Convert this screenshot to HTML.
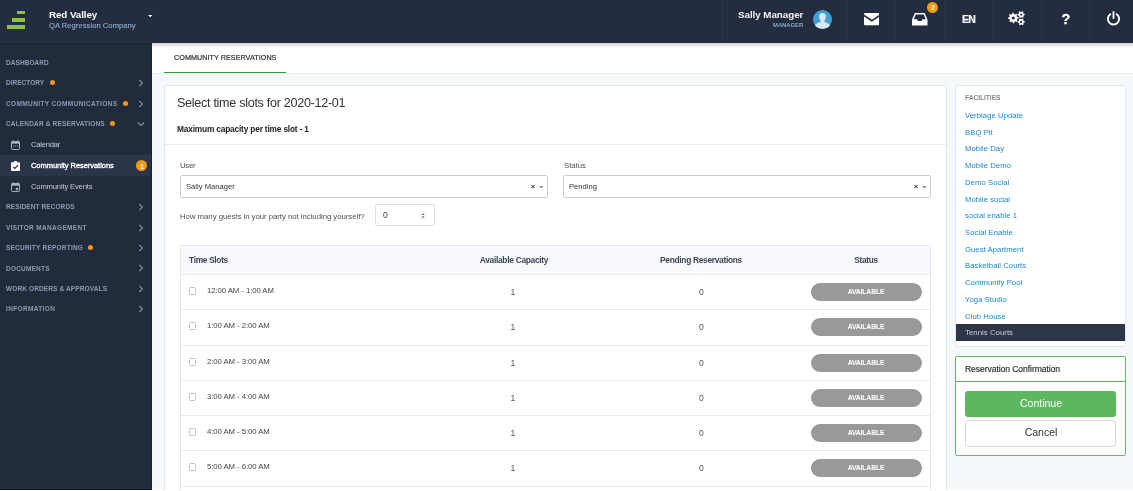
<!DOCTYPE html>
<html><head><meta charset="utf-8"><style>
html,body{margin:0;padding:0;width:1133px;height:491px;overflow:hidden;background:#f5f8fd;}
body{position:relative;font-family:"Liberation Sans",sans-serif;}
.t{position:absolute;white-space:nowrap;will-change:transform;}
.b{position:absolute;}
</style></head><body>
<div class="b" style="left:0px;top:0px;width:1133px;height:43px;background:#232d3f;"></div>
<div class="b" style="left:17px;top:10.6px;width:8px;height:3.700000000000001px;background:#8cc63e;"></div>
<div class="b" style="left:12px;top:18px;width:13px;height:3.8000000000000007px;background:#8cc63e;"></div>
<div class="b" style="left:7px;top:25.3px;width:18px;height:3.8000000000000007px;background:#8cc63e;"></div>
<div class="t" style="top:9.70px;font-size:9.80px;line-height:9.80px;color:#ffffff;font-weight:bold;letter-spacing:-0.081px;left:48.50px;">Red Valley</div>
<div class="t" style="top:22.37px;font-size:7.60px;line-height:7.60px;color:#8da6c4;letter-spacing:0.047px;left:48.50px;-webkit-text-stroke:0.15px #8da6c4;">QA Regression Company</div>
<svg class="b" style="left:148px;top:14.8px" width="5" height="3"><path d="M0 0H4.4L2.2 2.2Z" fill="#fff"/></svg>
<div class="b" style="left:722px;top:0px;width:1px;height:43px;background:#2a3446;"></div>
<div class="b" style="left:847px;top:0px;width:1px;height:43px;background:#2a3446;"></div>
<div class="b" style="left:895px;top:0px;width:1px;height:43px;background:#2a3446;"></div>
<div class="b" style="left:944px;top:0px;width:1px;height:43px;background:#2a3446;"></div>
<div class="b" style="left:992px;top:0px;width:1px;height:43px;background:#2a3446;"></div>
<div class="b" style="left:1041px;top:0px;width:1px;height:43px;background:#2a3446;"></div>
<div class="b" style="left:1089px;top:0px;width:1px;height:43px;background:#2a3446;"></div>
<div class="t" style="top:10.20px;font-size:9.80px;line-height:9.80px;color:#f2f2f2;font-weight:bold;letter-spacing:-0.042px;right:329.54px;text-align:right;">Sally Manager</div>
<div class="t" style="top:22.90px;font-size:5.90px;line-height:5.90px;color:#89a5c6;font-weight:bold;letter-spacing:-0.031px;right:329.83px;text-align:right;">MANAGER</div>
<svg class="b" style="left:813px;top:10px" width="19" height="19" viewBox="0 0 19 19">
<defs><clipPath id="cc"><circle cx="9.5" cy="9.5" r="9.5"/></clipPath></defs>
<circle cx="9.5" cy="9.5" r="9.5" fill="#40a0d5"/>
<g clip-path="url(#cc)" fill="#d5e8f4">
<path d="M6.2 6.6 C6.2 4.1 7.5 3 9.5 3 C11.5 3 12.8 4.1 12.8 6.6 C12.8 8.6 12.1 10 11.4 10.8 L11.4 12.1 C13.6 12.7 16 13.7 17.6 15.4 L17.6 19 L1.4 19 L1.4 15.4 C3 13.7 5.4 12.7 7.6 12.1 L7.6 10.8 C6.9 10 6.2 8.6 6.2 6.6Z"/>
</g></svg>
<svg class="b" style="left:863.5px;top:13px" width="15.7" height="12.7" viewBox="0 0 17 13" preserveAspectRatio="none">
<path d="M1.2 0 H15.8 Q17 0 17 1.2 V1.6 L8.5 7 L0 1.6 V1.2 Q0 0 1.2 0Z" fill="#fff"/>
<path d="M0 3.6 L8.5 9 L17 3.6 V11.6 Q17 12.6 15.8 12.6 H1.2 Q0 12.6 0 11.6Z" fill="#fff"/>
</svg>
<svg class="b" style="left:912px;top:12.8px" width="15.5" height="12.9" viewBox="0 0 16 13" preserveAspectRatio="none">
<path d="M3 0 H13 L16 6.5 V12 Q16 12.6 15.4 12.6 H0.6 Q0 12.6 0 12 V6.5Z M3.8 1.6 L1.9 6.2 H5.2 L6.1 8 H9.9 L10.8 6.2 H14.1 L12.2 1.6Z" fill="#fff" fill-rule="evenodd"/>
</svg>
<div class="b" style="left:927px;top:1.5px;width:11px;height:11px;border-radius:50%;background:#f5990c;"></div>
<div class="t" style="top:3.97px;font-size:7.00px;line-height:7.00px;color:#fff;font-weight:bold;left:632.50px;width:600px;text-align:center;">2</div>
<div class="t" style="top:13.71px;font-size:10.50px;line-height:10.50px;color:#f4f4f4;font-weight:bold;letter-spacing:-0.787px;left:961.50px;-webkit-text-stroke:0.2px #f4f4f4;">EN</div>
<svg class="b" style="left:1008px;top:11px" width="18" height="15" viewBox="0 0 18 15"><path fill-rule="evenodd" d="M10.54,6.22 L10.59,7.26 L9.08,7.95 L8.83,8.67 L9.56,10.16 L8.86,10.93 L7.31,10.35 L6.61,10.67 L6.08,12.24 L5.04,12.29 L4.35,10.78 L3.63,10.53 L2.14,11.26 L1.37,10.56 L1.95,9.01 L1.63,8.31 L0.06,7.78 L0.01,6.74 L1.52,6.05 L1.77,5.33 L1.04,3.84 L1.74,3.07 L3.29,3.65 L3.99,3.33 L4.52,1.76 L5.56,1.71 L6.25,3.22 L6.97,3.47 L8.46,2.74 L9.23,3.44 L8.65,4.99 L8.97,5.69Z M6.9,7.0 A1.6,1.6 0 1,0 3.6999999999999997,7.0 A1.6,1.6 0 1,0 6.9,7.0Z" fill="#fff"/><path fill-rule="evenodd" d="M16.73,2.90 L16.79,3.84 L15.66,4.44 L15.36,5.04 L15.57,6.31 L14.79,6.83 L13.71,6.15 L13.03,6.19 L12.04,7.01 L11.20,6.59 L11.25,5.31 L10.87,4.75 L9.67,4.30 L9.61,3.36 L10.74,2.76 L11.04,2.16 L10.83,0.89 L11.61,0.37 L12.69,1.05 L13.37,1.01 L14.36,0.19 L15.20,0.61 L15.15,1.89 L15.53,2.45Z M14.299999999999999,3.6 A1.1,1.1 0 1,0 12.1,3.6 A1.1,1.1 0 1,0 14.299999999999999,3.6Z" fill="#fff"/><path fill-rule="evenodd" d="M16.73,10.20 L16.79,11.14 L15.66,11.74 L15.36,12.34 L15.57,13.61 L14.79,14.13 L13.71,13.45 L13.03,13.49 L12.04,14.31 L11.20,13.89 L11.25,12.61 L10.87,12.05 L9.67,11.60 L9.61,10.66 L10.74,10.06 L11.04,9.46 L10.83,8.19 L11.61,7.67 L12.69,8.35 L13.37,8.31 L14.36,7.49 L15.20,7.91 L15.15,9.19 L15.53,9.75Z M14.299999999999999,10.9 A1.1,1.1 0 1,0 12.1,10.9 A1.1,1.1 0 1,0 14.299999999999999,10.9Z" fill="#fff"/></svg>
<div class="t" style="top:12.21px;font-size:14.40px;line-height:14.40px;color:#fff;font-weight:bold;left:765.60px;width:600px;text-align:center;-webkit-text-stroke:0.3px #fff;">?</div>
<svg class="b" style="left:1106px;top:11px" width="15" height="15" viewBox="0 0 15 15">
<path d="M4.3 3.3 A5.6 5.6 0 1 0 10.7 3.3" fill="none" stroke="#fff" stroke-width="1.9" stroke-linecap="round"/>
<path d="M7.5 1 V7" stroke="#fff" stroke-width="1.9" stroke-linecap="round"/>
</svg>
<div class="b" style="left:0px;top:43px;width:152px;height:447px;background:#222b3b;"></div>
<div class="b" style="left:151px;top:43px;width:1px;height:447px;background:#1a2130;"></div>
<div class="b" style="left:0px;top:43px;width:152px;height:3px;background:linear-gradient(#1b2232,#222b3b);"></div>
<div class="t" style="top:60.07px;font-size:6.50px;line-height:6.50px;color:#8b9ab4;font-weight:bold;letter-spacing:0.056px;left:6.00px;">DASHBOARD</div>
<div class="t" style="top:80.47px;font-size:6.50px;line-height:6.50px;color:#8b9ab4;font-weight:bold;letter-spacing:0.022px;left:6.00px;">DIRECTORY</div>
<div class="b" style="left:50.2px;top:80.13600000000001px;width:5px;height:5px;border-radius:50%;background:#f7941d;"></div>
<svg class="b" style="left:138px;top:79.14px" width="6" height="8"><path d="M1.3 0.9 L4.4 4 L1.3 7.1" fill="none" stroke="#8592ab" stroke-width="1.15"/></svg>
<div class="t" style="top:100.97px;font-size:6.50px;line-height:6.50px;color:#8b9ab4;font-weight:bold;letter-spacing:0.378px;left:6.00px;">COMMUNITY COMMUNICATIONS</div>
<div class="b" style="left:122.5px;top:100.63600000000001px;width:5px;height:5px;border-radius:50%;background:#f7941d;"></div>
<svg class="b" style="left:138px;top:99.64px" width="6" height="8"><path d="M1.3 0.9 L4.4 4 L1.3 7.1" fill="none" stroke="#8592ab" stroke-width="1.15"/></svg>
<div class="t" style="top:121.07px;font-size:6.50px;line-height:6.50px;color:#8b9ab4;font-weight:bold;letter-spacing:0.164px;left:6.00px;">CALENDAR &amp; RESERVATIONS</div>
<div class="b" style="left:110.2px;top:120.736px;width:5px;height:5px;border-radius:50%;background:#f7941d;"></div>
<svg class="b" style="left:137px;top:120.74px" width="8" height="6"><path d="M0.9 1.3 L4 4.4 L7.1 1.3" fill="none" stroke="#8592ab" stroke-width="1.15"/></svg>
<div class="b" style="left:0px;top:155px;width:151px;height:21px;background:#2c3548;"></div>
<svg class="b" style="left:11px;top:140px" width="9" height="10" viewBox="0 0 9 10">
<path d="M2 0.3 V2 M7 0.3 V2" stroke="#aab3c2" stroke-width="1"/>
<rect x="0.5" y="1.5" width="8" height="8" rx="1" fill="none" stroke="#aab3c2" stroke-width="1"/>
<rect x="0.5" y="1.5" width="8" height="2.2" fill="#aab3c2"/>
<rect x="2" y="5.5" width="1" height="1" fill="#aab3c2"/><rect x="4" y="5.5" width="1" height="1" fill="#aab3c2"/><rect x="6" y="5.5" width="1" height="1" fill="#aab3c2"/>
</svg>
<svg class="b" style="left:11px;top:161px" width="9" height="10" viewBox="0 0 9 10">
<rect x="0" y="1.3" width="9" height="8.7" rx="1" fill="#fff"/>
<rect x="3" y="0" width="3" height="2.2" rx="0.5" fill="#fff"/>
<path d="M2.2 5.9 L3.8 7.4 L6.9 4.2" fill="none" stroke="#2c3548" stroke-width="1.3"/>
</svg>
<svg class="b" style="left:11px;top:182px" width="9" height="10" viewBox="0 0 9 10">
<path d="M2 0.3 V2 M7 0.3 V2" stroke="#aab3c2" stroke-width="1"/>
<rect x="0.5" y="1.5" width="8" height="8" rx="1" fill="none" stroke="#aab3c2" stroke-width="1"/>
<rect x="0.5" y="1.5" width="8" height="2.2" fill="#aab3c2"/>
<rect x="4.8" y="5.8" width="2.3" height="2.3" fill="#aab3c2"/>
</svg>
<div class="t" style="top:141.37px;font-size:7.60px;line-height:7.60px;color:#c5cbd5;letter-spacing:-0.235px;left:30.70px;">Calendar</div>
<div class="t" style="top:162.45px;font-size:7.50px;line-height:7.50px;color:#ffffff;letter-spacing:-0.048px;left:30.70px;-webkit-text-stroke:0.3px #fff;">Community Reservations</div>
<div class="t" style="top:183.17px;font-size:7.60px;line-height:7.60px;color:#c5cbd5;letter-spacing:-0.146px;left:30.70px;">Community Events</div>
<div class="b" style="left:136px;top:160px;width:11px;height:11px;border-radius:50%;background:#f5990c;"></div>
<div class="t" style="top:162.77px;font-size:7.00px;line-height:7.00px;color:#fff;font-weight:bold;left:-158.50px;width:600px;text-align:center;">1</div>
<div class="t" style="top:204.47px;font-size:6.50px;line-height:6.50px;color:#8b9ab4;font-weight:bold;letter-spacing:0.088px;left:6.00px;">RESIDENT RECORDS</div>
<svg class="b" style="left:138px;top:203.14px" width="6" height="8"><path d="M1.3 0.9 L4.4 4 L1.3 7.1" fill="none" stroke="#8592ab" stroke-width="1.15"/></svg>
<div class="t" style="top:224.87px;font-size:6.50px;line-height:6.50px;color:#8b9ab4;font-weight:bold;letter-spacing:0.319px;left:6.00px;">VISITOR MANAGEMENT</div>
<svg class="b" style="left:138px;top:223.54px" width="6" height="8"><path d="M1.3 0.9 L4.4 4 L1.3 7.1" fill="none" stroke="#8592ab" stroke-width="1.15"/></svg>
<div class="t" style="top:245.17px;font-size:6.50px;line-height:6.50px;color:#8b9ab4;font-weight:bold;letter-spacing:0.216px;left:6.00px;">SECURITY REPORTING</div>
<div class="b" style="left:87.9px;top:244.83599999999998px;width:5px;height:5px;border-radius:50%;background:#f7941d;"></div>
<svg class="b" style="left:138px;top:243.84px" width="6" height="8"><path d="M1.3 0.9 L4.4 4 L1.3 7.1" fill="none" stroke="#8592ab" stroke-width="1.15"/></svg>
<div class="t" style="top:265.57px;font-size:6.50px;line-height:6.50px;color:#8b9ab4;font-weight:bold;letter-spacing:0.204px;left:6.00px;">DOCUMENTS</div>
<svg class="b" style="left:138px;top:264.24px" width="6" height="8"><path d="M1.3 0.9 L4.4 4 L1.3 7.1" fill="none" stroke="#8592ab" stroke-width="1.15"/></svg>
<div class="t" style="top:285.97px;font-size:6.50px;line-height:6.50px;color:#8b9ab4;font-weight:bold;letter-spacing:0.126px;left:6.00px;">WORK ORDERS &amp; APPROVALS</div>
<svg class="b" style="left:138px;top:284.64px" width="6" height="8"><path d="M1.3 0.9 L4.4 4 L1.3 7.1" fill="none" stroke="#8592ab" stroke-width="1.15"/></svg>
<div class="t" style="top:306.27px;font-size:6.50px;line-height:6.50px;color:#8b9ab4;font-weight:bold;letter-spacing:0.349px;left:6.00px;">INFORMATION</div>
<svg class="b" style="left:138px;top:304.94px" width="6" height="8"><path d="M1.3 0.9 L4.4 4 L1.3 7.1" fill="none" stroke="#8592ab" stroke-width="1.15"/></svg>
<div class="b" style="left:0px;top:489px;width:152px;height:1px;background:#151b27;"></div>
<div class="b" style="left:152px;top:43px;width:981px;height:30px;background:#fff;"></div>
<div class="b" style="left:152px;top:73px;width:981px;height:418px;background:#f5f8fd;"></div>
<div class="b" style="left:152px;top:73px;width:981px;height:1px;background:#eef1f6;"></div>
<div class="b" style="left:152px;top:43px;width:981px;height:5px;background:linear-gradient(#d2d3d5,#ffffff);"></div>
<div class="t" style="top:54.10px;font-size:7.20px;line-height:7.20px;color:#303030;letter-spacing:0.053px;left:173.70px;-webkit-text-stroke:0.2px #303030;">COMMUNITY RESERVATIONS</div>
<div class="b" style="left:164px;top:72px;width:122px;height:1.4000000000000057px;background:#2b9a3e;"></div>
<div class="b" style="left:164px;top:85px;width:783px;height:410px;background:#fff;border:1px solid #dfe7f1;border-radius:2px;box-sizing:border-box;"></div>
<div class="t" style="top:97.23px;font-size:12.60px;line-height:12.60px;color:#333333;letter-spacing:-0.300px;left:177.20px;">Select time slots for 2020-12-01</div>
<div class="t" style="top:125.27px;font-size:8.30px;line-height:8.30px;color:#222222;font-weight:bold;letter-spacing:-0.165px;left:177.20px;">Maximum capacity per time slot - 1</div>
<div class="b" style="left:165px;top:144px;width:781px;height:1px;background:#e8edf3;"></div>
<div class="t" style="top:161.80px;font-size:7.80px;line-height:7.80px;color:#505050;letter-spacing:-0.299px;left:180.30px;">User</div>
<div class="b" style="left:180px;top:175px;width:368px;height:23px;border:1px solid #cfcfcf;border-radius:2px;box-sizing:border-box;background:#fff;"></div>
<div class="t" style="top:182.77px;font-size:7.60px;line-height:7.60px;color:#333;letter-spacing:0.027px;left:185.50px;">Sally Manager</div>
<div class="t" style="top:183.15px;font-size:7.50px;line-height:7.50px;color:#333;font-weight:bold;left:232.80px;width:600px;text-align:center;">×</div>
<svg class="b" style="left:539px;top:186px" width="5" height="3"><path d="M0 0H4.5L2.25 2.5Z" fill="#888"/></svg>
<div class="t" style="top:161.80px;font-size:7.80px;line-height:7.80px;color:#505050;letter-spacing:-0.029px;left:563.70px;">Status</div>
<div class="b" style="left:563px;top:175px;width:368px;height:23px;border:1px solid #cfcfcf;border-radius:2px;box-sizing:border-box;background:#fff;"></div>
<div class="t" style="top:182.77px;font-size:7.60px;line-height:7.60px;color:#333;letter-spacing:0.000px;left:569.00px;">Pending</div>
<div class="t" style="top:183.15px;font-size:7.50px;line-height:7.50px;color:#333;font-weight:bold;left:615.90px;width:600px;text-align:center;">×</div>
<svg class="b" style="left:921.5px;top:186px" width="5" height="3"><path d="M0 0H4.5L2.25 2.5Z" fill="#888"/></svg>
<div class="t" style="top:212.70px;font-size:7.80px;line-height:7.80px;color:#505050;letter-spacing:-0.041px;left:180.30px;">How many guests in your party not including yourself?</div>
<div class="b" style="left:375px;top:204px;width:60px;height:22px;border:1px solid #e0e0e0;border-radius:2px;box-sizing:border-box;background:#fff;"></div>
<div class="t" style="top:210.72px;font-size:8.60px;line-height:8.60px;color:#444;letter-spacing:-0.883px;left:383.00px;">0</div>
<svg class="b" style="left:420px;top:210.5px" width="6" height="9.5" viewBox="0 0 6 9.5">
<rect x="0.5" y="0.5" width="5" height="8.5" rx="2.5" fill="none" stroke="#e2e2e2" stroke-width="0.8"/>
<path d="M1.6 4 L3 2.3 L4.4 4 Z M1.6 5.5 L3 7.2 L4.4 5.5Z" fill="#555"/>
</svg>
<div class="b" style="left:180px;top:245px;width:751px;height:250px;border:1px solid #dfe7f0;border-radius:2px;box-sizing:border-box;background:#fff;"></div>
<div class="b" style="left:181px;top:246px;width:749px;height:28px;background:#f7f9fc;"></div>
<div class="t" style="top:255.99px;font-size:8.40px;line-height:8.40px;color:#3b4757;font-weight:bold;letter-spacing:-0.325px;left:189.40px;">Time Slots</div>
<div class="t" style="top:255.99px;font-size:8.40px;line-height:8.40px;color:#3b4757;font-weight:bold;letter-spacing:-0.290px;left:213.56px;width:600px;text-align:center;">Available Capacity</div>
<div class="t" style="top:255.99px;font-size:8.40px;line-height:8.40px;color:#3b4757;font-weight:bold;letter-spacing:-0.301px;left:401.35px;width:600px;text-align:center;">Pending Reservations</div>
<div class="t" style="top:255.99px;font-size:8.40px;line-height:8.40px;color:#3b4757;font-weight:bold;letter-spacing:-0.375px;left:565.81px;width:600px;text-align:center;">Status</div>
<div class="b" style="left:181px;top:274px;width:749px;height:1px;background:#e4ebf3;"></div>
<div class="b" style="left:189px;top:287px;width:7px;height:8px;border:1px solid #c4c4c4;border-radius:1.5px;box-sizing:border-box;background:#fff;"></div>
<div class="t" style="top:286.90px;font-size:7.80px;line-height:7.80px;color:#444;letter-spacing:-0.089px;left:207.00px;">12:00 AM - 1:00 AM</div>
<div class="t" style="top:288.02px;font-size:8.60px;line-height:8.60px;color:#555;left:213.30px;width:600px;text-align:center;">1</div>
<div class="t" style="top:288.02px;font-size:8.60px;line-height:8.60px;color:#555;letter-spacing:-0.883px;left:400.56px;width:600px;text-align:center;">0</div>
<div class="b" style="left:811px;top:283px;width:111px;height:18px;background:#999999;border-radius:9px;"></div>
<div class="t" style="top:289.06px;font-size:6.90px;line-height:6.90px;color:#fff;font-weight:bold;letter-spacing:-0.195px;left:566.30px;width:600px;text-align:center;">AVAILABLE</div>
<div class="b" style="left:181px;top:309px;width:749px;height:1px;background:#e4ebf3;"></div>
<div class="b" style="left:189px;top:322px;width:7px;height:8px;border:1px solid #c4c4c4;border-radius:1.5px;box-sizing:border-box;background:#fff;"></div>
<div class="t" style="top:321.90px;font-size:7.80px;line-height:7.80px;color:#444;letter-spacing:-0.088px;left:207.00px;">1:00 AM - 2:00 AM</div>
<div class="t" style="top:323.02px;font-size:8.60px;line-height:8.60px;color:#555;left:213.30px;width:600px;text-align:center;">1</div>
<div class="t" style="top:323.02px;font-size:8.60px;line-height:8.60px;color:#555;letter-spacing:-0.883px;left:400.56px;width:600px;text-align:center;">0</div>
<div class="b" style="left:811px;top:318px;width:111px;height:18px;background:#999999;border-radius:9px;"></div>
<div class="t" style="top:324.06px;font-size:6.90px;line-height:6.90px;color:#fff;font-weight:bold;letter-spacing:-0.195px;left:566.30px;width:600px;text-align:center;">AVAILABLE</div>
<div class="b" style="left:181px;top:345px;width:749px;height:1px;background:#e4ebf3;"></div>
<div class="b" style="left:189px;top:358px;width:7px;height:8px;border:1px solid #c4c4c4;border-radius:1.5px;box-sizing:border-box;background:#fff;"></div>
<div class="t" style="top:357.90px;font-size:7.80px;line-height:7.80px;color:#444;letter-spacing:-0.088px;left:207.00px;">2:00 AM - 3:00 AM</div>
<div class="t" style="top:359.02px;font-size:8.60px;line-height:8.60px;color:#555;left:213.30px;width:600px;text-align:center;">1</div>
<div class="t" style="top:359.02px;font-size:8.60px;line-height:8.60px;color:#555;letter-spacing:-0.883px;left:400.56px;width:600px;text-align:center;">0</div>
<div class="b" style="left:811px;top:354px;width:111px;height:18px;background:#999999;border-radius:9px;"></div>
<div class="t" style="top:360.06px;font-size:6.90px;line-height:6.90px;color:#fff;font-weight:bold;letter-spacing:-0.195px;left:566.30px;width:600px;text-align:center;">AVAILABLE</div>
<div class="b" style="left:181px;top:380px;width:749px;height:1px;background:#e4ebf3;"></div>
<div class="b" style="left:189px;top:393px;width:7px;height:8px;border:1px solid #c4c4c4;border-radius:1.5px;box-sizing:border-box;background:#fff;"></div>
<div class="t" style="top:392.90px;font-size:7.80px;line-height:7.80px;color:#444;letter-spacing:-0.088px;left:207.00px;">3:00 AM - 4:00 AM</div>
<div class="t" style="top:394.02px;font-size:8.60px;line-height:8.60px;color:#555;left:213.30px;width:600px;text-align:center;">1</div>
<div class="t" style="top:394.02px;font-size:8.60px;line-height:8.60px;color:#555;letter-spacing:-0.883px;left:400.56px;width:600px;text-align:center;">0</div>
<div class="b" style="left:811px;top:389px;width:111px;height:18px;background:#999999;border-radius:9px;"></div>
<div class="t" style="top:395.06px;font-size:6.90px;line-height:6.90px;color:#fff;font-weight:bold;letter-spacing:-0.195px;left:566.30px;width:600px;text-align:center;">AVAILABLE</div>
<div class="b" style="left:181px;top:415px;width:749px;height:1px;background:#e4ebf3;"></div>
<div class="b" style="left:189px;top:428px;width:7px;height:8px;border:1px solid #c4c4c4;border-radius:1.5px;box-sizing:border-box;background:#fff;"></div>
<div class="t" style="top:427.90px;font-size:7.80px;line-height:7.80px;color:#444;letter-spacing:-0.088px;left:207.00px;">4:00 AM - 5:00 AM</div>
<div class="t" style="top:429.02px;font-size:8.60px;line-height:8.60px;color:#555;left:213.30px;width:600px;text-align:center;">1</div>
<div class="t" style="top:429.02px;font-size:8.60px;line-height:8.60px;color:#555;letter-spacing:-0.883px;left:400.56px;width:600px;text-align:center;">0</div>
<div class="b" style="left:811px;top:424px;width:111px;height:18px;background:#999999;border-radius:9px;"></div>
<div class="t" style="top:430.06px;font-size:6.90px;line-height:6.90px;color:#fff;font-weight:bold;letter-spacing:-0.195px;left:566.30px;width:600px;text-align:center;">AVAILABLE</div>
<div class="b" style="left:181px;top:450px;width:749px;height:1px;background:#e4ebf3;"></div>
<div class="b" style="left:189px;top:463px;width:7px;height:8px;border:1px solid #c4c4c4;border-radius:1.5px;box-sizing:border-box;background:#fff;"></div>
<div class="t" style="top:462.90px;font-size:7.80px;line-height:7.80px;color:#444;letter-spacing:-0.088px;left:207.00px;">5:00 AM - 6:00 AM</div>
<div class="t" style="top:464.02px;font-size:8.60px;line-height:8.60px;color:#555;left:213.30px;width:600px;text-align:center;">1</div>
<div class="t" style="top:464.02px;font-size:8.60px;line-height:8.60px;color:#555;letter-spacing:-0.883px;left:400.56px;width:600px;text-align:center;">0</div>
<div class="b" style="left:811px;top:459px;width:111px;height:18px;background:#999999;border-radius:9px;"></div>
<div class="t" style="top:465.06px;font-size:6.90px;line-height:6.90px;color:#fff;font-weight:bold;letter-spacing:-0.195px;left:566.30px;width:600px;text-align:center;">AVAILABLE</div>
<div class="b" style="left:181px;top:486px;width:749px;height:1px;background:#e4ebf3;"></div>
<div class="b" style="left:955px;top:85px;width:171px;height:262px;background:#fff;border:1px solid #e0e8f0;border-radius:2px;box-sizing:border-box;"></div>
<div class="t" style="top:94.93px;font-size:6.70px;line-height:6.70px;color:#8a8a8a;font-weight:bold;letter-spacing:-0.056px;left:965.10px;">FACILITIES</div>
<div class="t" style="top:111.98px;font-size:7.70px;line-height:7.70px;color:#1886d0;letter-spacing:0.059px;left:965.10px;">Verbiage Update</div>
<div class="t" style="top:128.70px;font-size:7.70px;line-height:7.70px;color:#1886d0;letter-spacing:0.066px;left:965.10px;">BBQ Pit</div>
<div class="t" style="top:145.42px;font-size:7.70px;line-height:7.70px;color:#1886d0;letter-spacing:0.061px;left:965.10px;">Mobile Day</div>
<div class="t" style="top:162.14px;font-size:7.70px;line-height:7.70px;color:#1886d0;letter-spacing:0.065px;left:965.10px;">Mobile Demo</div>
<div class="t" style="top:178.86px;font-size:7.70px;line-height:7.70px;color:#1886d0;letter-spacing:0.063px;left:965.10px;">Demo Social</div>
<div class="t" style="top:195.58px;font-size:7.70px;line-height:7.70px;color:#1886d0;letter-spacing:0.053px;left:965.10px;">Mobile social</div>
<div class="t" style="top:212.30px;font-size:7.70px;line-height:7.70px;color:#1886d0;letter-spacing:0.053px;left:965.10px;">social enable 1</div>
<div class="t" style="top:229.02px;font-size:7.70px;line-height:7.70px;color:#1886d0;letter-spacing:0.056px;left:965.10px;">Social Enable</div>
<div class="t" style="top:245.74px;font-size:7.70px;line-height:7.70px;color:#1886d0;letter-spacing:0.059px;left:965.10px;">Guest Apartment</div>
<div class="t" style="top:262.46px;font-size:7.70px;line-height:7.70px;color:#1886d0;letter-spacing:0.054px;left:965.10px;">Basketball Courts</div>
<div class="t" style="top:279.18px;font-size:7.70px;line-height:7.70px;color:#1886d0;letter-spacing:0.062px;left:965.10px;">Community Pool</div>
<div class="t" style="top:295.90px;font-size:7.70px;line-height:7.70px;color:#1886d0;letter-spacing:0.059px;left:965.10px;">Yoga Studio</div>
<div class="t" style="top:312.62px;font-size:7.70px;line-height:7.70px;color:#1886d0;letter-spacing:0.064px;left:965.10px;">Club House</div>
<div class="b" style="left:956px;top:324px;width:169px;height:17px;background:#2d3549;"></div>
<div class="t" style="top:329.31px;font-size:7.90px;line-height:7.90px;color:#c8ccd4;letter-spacing:-0.017px;left:965.10px;">Tennis Courts</div>
<div class="b" style="left:955px;top:356px;width:171px;height:100px;border:1px solid #62bb62;border-radius:2px;box-sizing:border-box;background:#fff;"></div>
<div class="b" style="left:956px;top:381px;width:169px;height:1px;background:#62bb62;"></div>
<div class="t" style="top:364.52px;font-size:8.60px;line-height:8.60px;color:#2a2a2a;letter-spacing:-0.084px;left:965.20px;-webkit-text-stroke:0.15px #2a2a2a;">Reservation Confirmation</div>
<div class="b" style="left:965px;top:391px;width:151px;height:26px;background:#5cb85c;border-radius:3px;"></div>
<div class="t" style="top:397.92px;font-size:10.60px;line-height:10.60px;color:#fff;letter-spacing:-0.047px;left:740.58px;width:600px;text-align:center;">Continue</div>
<div class="b" style="left:965px;top:420px;width:151px;height:27px;background:#fff;border:1px solid #d8d8d8;border-radius:3px;box-sizing:border-box;"></div>
<div class="t" style="top:427.02px;font-size:10.60px;line-height:10.60px;color:#333;letter-spacing:-0.039px;left:740.58px;width:600px;text-align:center;">Cancel</div>
<div class="b" style="left:0px;top:490px;width:1133px;height:1px;background:#ffffff;"></div>
</body></html>
